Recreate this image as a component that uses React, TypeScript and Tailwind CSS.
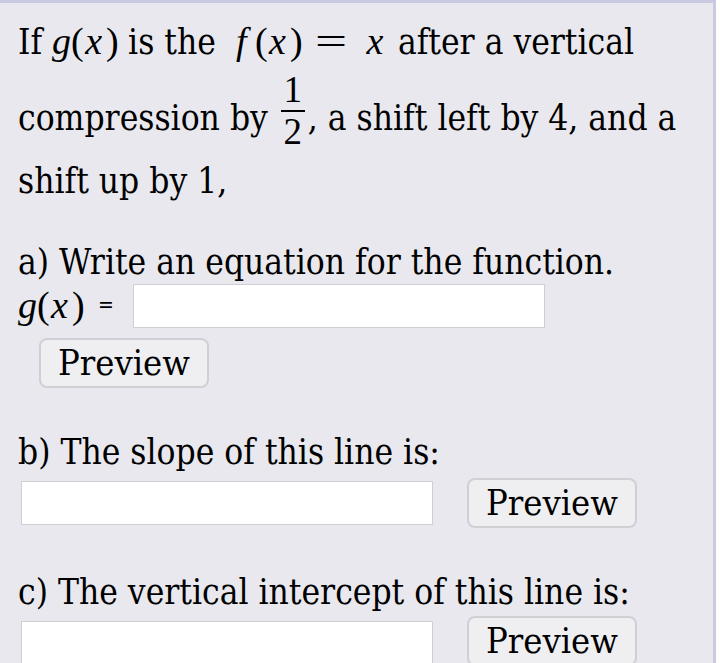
import React from 'react';

const serif = { fontFamily: '"DejaVu Serif Condensed", "DejaVu Serif", serif', fontStretch: 'condensed' as const };
const tex = "font-['Liberation_Serif',serif] text-[38px] leading-none";

// g(x) / f(x) set like MathJax output: italic letters, upright parens
function Fn({ name }: { name: 'g' | 'f' }) {
    return (
        <span className="whitespace-nowrap">
            {name === 'g' ? (
                <span className={`inline-block w-[19px] ${tex} italic`}>g</span>
            ) : (
                <span className={`inline-block w-[21px] pl-[2px] ${tex} italic`}>f</span>
            )}
            <span className={`inline-block w-[10px] ${tex}`}>(</span>
            <span className={`inline-block w-[25px] text-center ${tex} italic`}>x</span>
            <span className={`inline-block w-[12px] ${tex}`}>)</span>
        </span>
    );
}

function Frac() {
    return (
        <span className="inline-flex flex-col items-center align-[28px] mx-[3px] leading-none font-['Liberation_Serif',serif] text-[37px]">
            <span>1</span>
            <span className="w-[24px] h-[2px] bg-black mt-[2px]"></span>
            <span className="mt-[1px]">2</span>
        </span>
    );
}

function PreviewButton() {
    return (
        <button className="w-[170px] h-[50px] rounded-lg border-2 border-[#d0d0d4] bg-[#efeff1] text-[36px] leading-none text-black shrink-0">
            Preview
        </button>
    );
}

export default function App() {
    return (
        <div className="w-[720px] h-[663px] overflow-hidden bg-white">
            <div
                className="w-[716px] h-[663px] bg-[#e8e8ee] border-t-[3px] border-r-[3px] border-[#c9cae2] text-black text-[35px] pl-[18px] pr-2 overflow-hidden"
                style={serif}
            >
                {/* Question stem */}
                <div className="mt-[8px] leading-[62px] whitespace-nowrap">
                    <div>
                        If <Fn name="g" /> is the <span className="ml-[8px]"><Fn name="f" /></span>
                        <span className={`inline-block w-[34px] ml-[12px] text-center scale-x-150 ${tex}`}>=</span>
                        <span className={`inline-block w-[26px] ml-[14px] text-center ${tex} italic`}>x</span> after a vertical
                    </div>
                    <div className="-mt-[2px]">
                        compression by <Frac />, a shift left by 4, and a
                    </div>
                    <div>shift up by 1,</div>
                </div>

                {/* Part a */}
                <p className="mt-[30px] leading-[40px]">a) Write an equation for the function.</p>
                <div className="flex items-center mt-[2px]">
                    <span className="leading-[44px]">
                        <Fn name="g" />
                    </span>
                    <span className="font-['DejaVu_Sans',sans-serif] text-[21px] ml-[14px]">=</span>
                    <input className="w-[412px] h-[44px] bg-white border border-[#cfcfd4] ml-[19px]" />
                </div>
                <div className="mt-[9px] ml-[21px]">
                    <PreviewButton />
                </div>

                {/* Part b */}
                <p className="mt-[42px] leading-[40px]">b) The slope of this line is:</p>
                <div className="flex items-center gap-[34px] mt-[6px] ml-[3px]">
                    <input className="w-[412px] h-[44px] bg-white border border-[#cfcfd4]" />
                    <PreviewButton />
                </div>

                {/* Part c */}
                <p className="mt-[44px] leading-[40px]">c) The vertical intercept of this line is:</p>
                <div className="flex items-start gap-[34px] mt-[4px] ml-[3px]">
                    <input className="w-[412px] h-[50px] bg-white border border-[#cfcfd4] mt-[5px]" />
                    <PreviewButton />
                </div>
            </div>
        </div>
    );
}
